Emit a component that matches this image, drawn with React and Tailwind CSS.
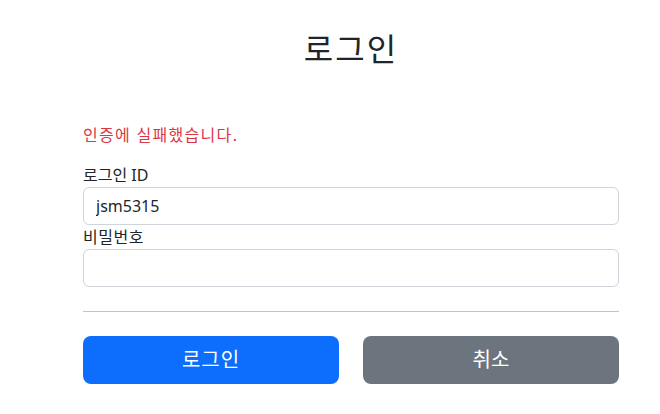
export default function App() {
  return (
    <div className="min-h-[414px] bg-white text-[#212529] font-['Noto_Sans','Noto_Sans_CJK_KR',sans-serif]">
      <div className="ml-[83px] w-[536px] pt-[30px]">
        <h2 className="text-center text-[32px] leading-[38px] font-normal tracking-[2px] mb-[55px]">로그인</h2>

        <form>
          <div className="text-[#dc3545] text-base leading-6 tracking-[1.3px] mb-4">인증에 실패했습니다.</div>

          <div>
            <label className="block text-base leading-6">로그인 ID</label>
            <input
              type="text"
              defaultValue="jsm5315"
              className="block w-full h-[38px] px-3 text-base border border-[#ced4da] rounded-[6px] outline-none text-[#212529]"
            />
          </div>
          <div>
            <label className="block text-base leading-6 tracking-[0.5px]">비밀번호</label>
            <input
              type="password"
              className="block w-full h-[38px] px-3 text-base border border-[#ced4da] rounded-[6px] outline-none"
            />
          </div>

          <hr className="my-6 border-0 border-t border-[#c4c4c4]" />

          <div className="grid grid-cols-2 gap-6">
            <button
              type="submit"
              className="h-12 bg-[#0d6efd] text-white text-xl tracking-[1px] rounded-lg"
            >
              로그인
            </button>
            <button
              type="button"
              className="h-12 bg-[#6c757d] text-white text-xl rounded-lg"
            >
              취소
            </button>
          </div>
        </form>
      </div>
    </div>
  );
}
